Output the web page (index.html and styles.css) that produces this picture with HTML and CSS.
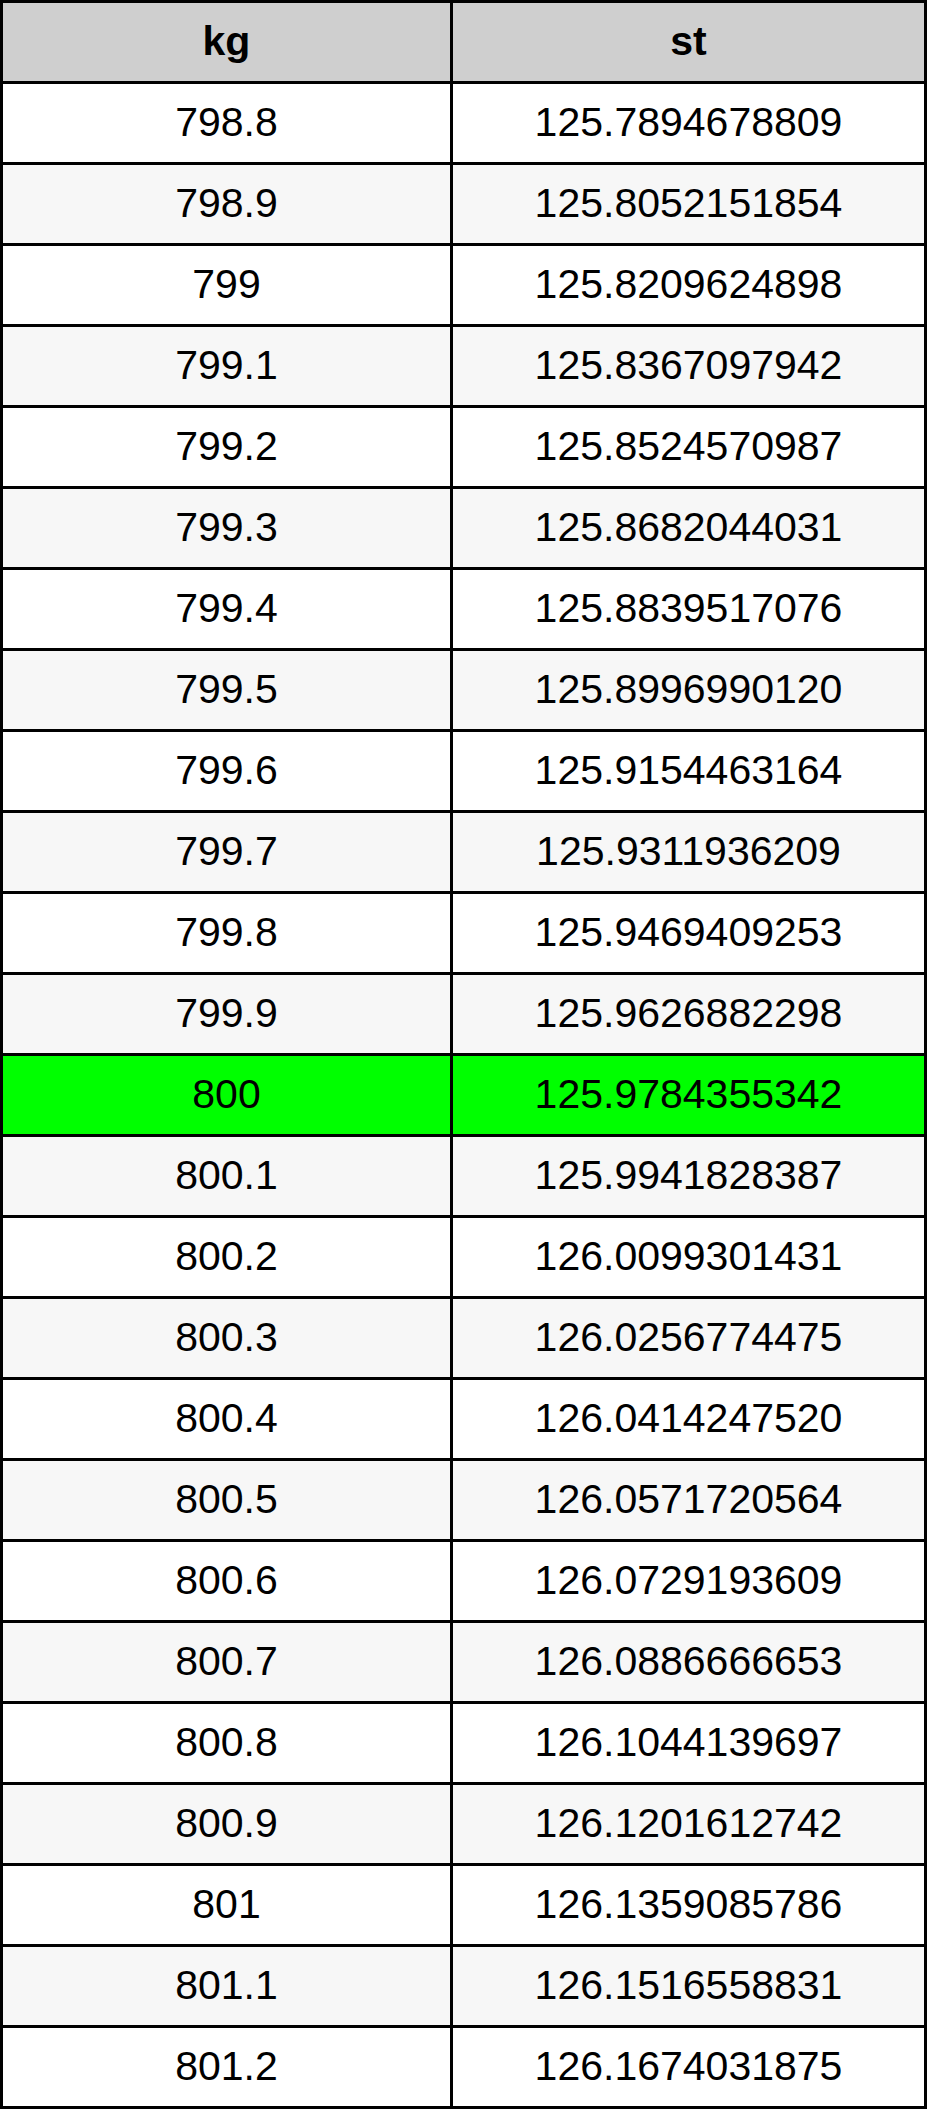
FILE: index.html
```html
<!DOCTYPE html>
<html>
<head>
<meta charset="utf-8">
<title>kg to st</title>
<link rel="stylesheet" href="styles.css">
</head>
<body>
<div class="table">
  <div class="cell head">kg</div><div class="cell head">st</div>
  <div class="cell">798.8</div><div class="cell">125.7894678809</div>
  <div class="cell alt">798.9</div><div class="cell alt">125.8052151854</div>
  <div class="cell">799</div><div class="cell">125.8209624898</div>
  <div class="cell alt">799.1</div><div class="cell alt">125.8367097942</div>
  <div class="cell">799.2</div><div class="cell">125.8524570987</div>
  <div class="cell alt">799.3</div><div class="cell alt">125.8682044031</div>
  <div class="cell">799.4</div><div class="cell">125.8839517076</div>
  <div class="cell alt">799.5</div><div class="cell alt">125.8996990120</div>
  <div class="cell">799.6</div><div class="cell">125.9154463164</div>
  <div class="cell alt">799.7</div><div class="cell alt">125.9311936209</div>
  <div class="cell">799.8</div><div class="cell">125.9469409253</div>
  <div class="cell alt">799.9</div><div class="cell alt">125.9626882298</div>
  <div class="cell hl">800</div><div class="cell hl">125.9784355342</div>
  <div class="cell alt">800.1</div><div class="cell alt">125.9941828387</div>
  <div class="cell">800.2</div><div class="cell">126.0099301431</div>
  <div class="cell alt">800.3</div><div class="cell alt">126.0256774475</div>
  <div class="cell">800.4</div><div class="cell">126.0414247520</div>
  <div class="cell alt">800.5</div><div class="cell alt">126.0571720564</div>
  <div class="cell">800.6</div><div class="cell">126.0729193609</div>
  <div class="cell alt">800.7</div><div class="cell alt">126.0886666653</div>
  <div class="cell">800.8</div><div class="cell">126.1044139697</div>
  <div class="cell alt">800.9</div><div class="cell alt">126.1201612742</div>
  <div class="cell">801</div><div class="cell">126.1359085786</div>
  <div class="cell alt">801.1</div><div class="cell alt">126.1516558831</div>
  <div class="cell">801.2</div><div class="cell">126.1674031875</div>
</div>
</body>
</html>
```
FILE: styles.css
```css
html, body {
  margin: 0;
  padding: 0;
  background: #ffffff;
}

.table {
  display: grid;
  grid-template-columns: 447px 471px;
  grid-auto-rows: 78px;
  gap: 3px;
  padding: 3px;
  width: 921px;
  background: #000000;
  font-family: "Liberation Sans", Arial, sans-serif;
  font-size: 41px;
  color: #000000;
}

.cell {
  display: flex;
  align-items: center;
  justify-content: center;
  background: #ffffff;
  padding-bottom: 2px;
  box-sizing: border-box;
}

.cell.alt {
  background: #f7f7f7;
}

.cell.head {
  background: #cfcfcf;
  font-weight: bold;
}

.cell.hl {
  background: #00ff00;
}
```
